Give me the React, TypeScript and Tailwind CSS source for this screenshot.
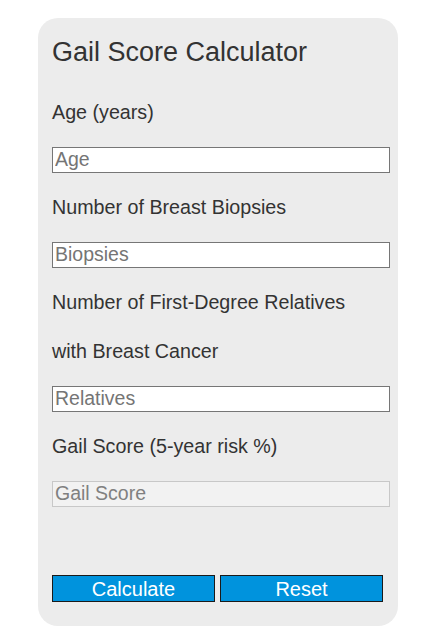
export default function App() {
  return (
    <div className="min-h-screen bg-white pt-[18px] pl-[38px] font-['Liberation_Sans',Arial,sans-serif]">
      <div className="w-[360px] h-[608px] rounded-[20px] bg-[#ececec] pl-[14px] pt-[16px] flex flex-col">
        <h1 className="text-[27px] leading-[36px] text-[#333] mb-[18px]">Gail Score Calculator</h1>

        <label className="text-[19.7px] leading-[49px] text-[#333]">Age (years)</label>
        <input
          placeholder="Age"
          className="w-[338px] h-[26px] my-[10px] border border-[#767676] bg-white px-[2px] text-[19.5px] placeholder:text-[#757575] outline-none"
        />

        <label className="text-[19.7px] leading-[49px] text-[#333]">Number of Breast Biopsies</label>
        <input
          placeholder="Biopsies"
          className="w-[338px] h-[26px] my-[10px] border border-[#767676] bg-white px-[2px] text-[19.5px] placeholder:text-[#757575] outline-none"
        />

        <label className="text-[19.7px] leading-[49px] text-[#333]">
          Number of First-Degree Relatives
          <br />
          with Breast Cancer
        </label>
        <input
          placeholder="Relatives"
          className="w-[338px] h-[26px] my-[10px] border border-[#767676] bg-white px-[2px] text-[19.5px] placeholder:text-[#757575] outline-none"
        />

        <label className="text-[19.7px] leading-[49px] text-[#333]">Gail Score (5-year risk %)</label>
        <input
          placeholder="Gail Score"
          readOnly
          className="w-[338px] h-[26px] my-[10px] border border-[#c8c8c8] bg-[#f2f2f2] px-[2px] text-[19.5px] placeholder:text-[#808080] outline-none"
        />

        <div className="mt-[58px] flex gap-[5px]">
          <button className="w-[163px] h-[27px] bg-[#0093dd] border border-[#1a1a1a] text-white text-[20px] leading-none">
            Calculate
          </button>
          <button className="w-[163px] h-[27px] bg-[#0093dd] border border-[#1a1a1a] text-white text-[20px] leading-none">
            Reset
          </button>
        </div>
      </div>
    </div>
  );
}
